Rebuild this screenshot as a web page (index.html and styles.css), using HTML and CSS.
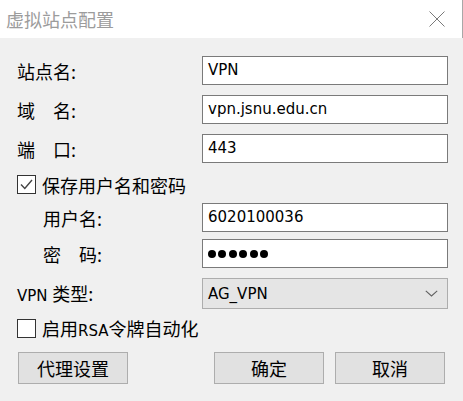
FILE: index.html
```html
<!DOCTYPE html>
<html lang="zh-CN">
<head>
<meta charset="utf-8">
<title>虚拟站点配置</title>
<link rel="stylesheet" href="styles.css">
</head>
<body>
<div class="window">
  <div class="titlebar">
    <span class="title">虚拟站点配置</span>
    <svg class="close" width="16" height="16" viewBox="0 0 16 16"><path d="M0.5 0.5 L15.5 15.5 M15.5 0.5 L0.5 15.5" stroke="#7a7a7a" stroke-width="1" fill="none"/></svg>
  </div>
  <div class="content">
    <div class="row r1">
      <span class="label">站点名:</span>
      <div class="field">VPN</div>
    </div>
    <div class="row r2">
      <span class="label">域　名:</span>
      <div class="field">vpn.jsnu.edu.cn</div>
    </div>
    <div class="row r3">
      <span class="label">端　口:</span>
      <div class="field">443</div>
    </div>
    <div class="check c1">
      <span class="box"><svg width="17" height="17" viewBox="0 0 17 17"><path d="M3 8.5 L6.8 12.5 L14 4" stroke="#444" stroke-width="1.4" fill="none"/></svg></span>
      <span class="ctext">保存用户名和密码</span>
    </div>
    <div class="row r4">
      <span class="label sub">用户名:</span>
      <div class="field">6020100036</div>
    </div>
    <div class="row r5">
      <span class="label sub">密　码:</span>
      <div class="field dots"><i></i><i></i><i></i><i></i><i></i><i></i></div>
    </div>
    <div class="row r6">
      <span class="label"><span class="latin">VPN </span>类型:</span>
      <div class="select">
        <span>AG_VPN</span>
        <svg class="chev" width="13" height="7" viewBox="0 0 13 7"><path d="M0.8 0.8 L6.5 6 L12.2 0.8" stroke="#606060" stroke-width="1.1" fill="none"/></svg>
      </div>
    </div>
    <div class="check c2">
      <span class="box"></span>
      <span class="ctext">启用<span class="latin">RSA</span>令牌自动化</span>
    </div>
    <div class="buttons">
      <div class="btn proxy">代理设置</div>
      <div class="btn ok">确定</div>
      <div class="btn cancel">取消</div>
    </div>
  </div>
</div>
</body>
</html>
```
FILE: styles.css
```css
html, body {
  margin: 0;
  padding: 0;
}
body {
  width: 463px;
  height: 401px;
  overflow: hidden;
  background: #f0f0f0;
  font-family: "Noto Sans CJK SC", "Noto Sans", sans-serif;
  color: #000;
}
.window {
  width: 463px;
  height: 401px;
}
.titlebar {
  height: 38px;
  background: #fff;
  display: flex;
  align-items: center;
  justify-content: space-between;
  padding-left: 6px;
  padding-right: 17px;
  box-sizing: border-box;
  border-right: 1px solid #a8a8a8;
}
.title {
  font-size: 18px;
  line-height: 1;
  color: #9c9c9c;
}
.close {
  display: block;
}
.content {
  padding-left: 17px;
  padding-top: 18px;
}
.row {
  display: flex;
  align-items: center;
}
.label {
  flex: 0 0 185px;
  font-size: 18px;
  line-height: 1;
}
.latin {
  font-family: "DejaVu Sans", "Liberation Sans", sans-serif;
  font-size: 15px;
  white-space: pre;
}
.label.sub {
  box-sizing: border-box;
  padding-left: 26px;
}
.field {
  box-sizing: border-box;
  width: 246px;
  height: 29px;
  border: 1px solid #7a7a7a;
  background: #fff;
  font-family: "DejaVu Sans", "Liberation Sans", sans-serif;
  font-size: 15px;
  line-height: 27px;
  padding-left: 5px;
}
.r2, .r3 { margin-top: 10px; }
.c1 { margin-top: 12px; }
.r4 { margin-top: 9px; }
.r5 { margin-top: 7px; }
.r6 { margin-top: 10px; }
.c2 { margin-top: 10px; }
.dots {
  display: flex;
  align-items: center;
  gap: 2.4px;
}
.dots i {
  display: block;
  width: 8px;
  height: 8px;
  border-radius: 50%;
  background: #000;
}
.select {
  box-sizing: border-box;
  width: 246px;
  height: 31px;
  border: 1px solid #adadad;
  background: #e5e5e5;
  display: flex;
  align-items: center;
  justify-content: space-between;
  padding-left: 5px;
  padding-right: 9px;
  font-family: "DejaVu Sans", "Liberation Sans", sans-serif;
  font-size: 15px;
}
.chev { display: block; }
.check {
  display: flex;
  align-items: center;
  height: 19px;
}
.box {
  box-sizing: border-box;
  width: 19px;
  height: 19px;
  border: 1px solid #333;
  background: #fff;
  display: flex;
  align-items: center;
  justify-content: center;
}
.box svg { display: block; }
.ctext {
  margin-left: 6px;
  font-size: 18px;
  line-height: 1;
}
.buttons {
  display: flex;
  margin-top: 14px;
  padding-left: 1px;
}
.btn {
  box-sizing: border-box;
  width: 110px;
  height: 32px;
  border: 1px solid #adadad;
  background: #e1e1e1;
  font-size: 18px;
  line-height: 30px;
  text-align: center;
}
.ok { margin-left: 86px; }
.cancel { margin-left: 11px; }
```
